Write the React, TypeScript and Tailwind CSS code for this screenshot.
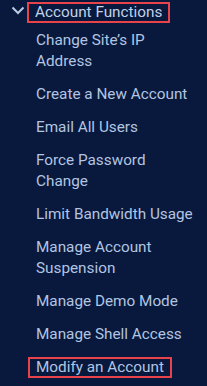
const items = [
    "Change Site\u2019s IP Address",
    "Create a New Account",
    "Email All Users",
    "Force Password Change",
    "Limit Bandwidth Usage",
    "Manage Account Suspension",
    "Manage Demo Mode",
    "Manage Shell Access",
]

export default function App() {
    return (
        <div className="w-[207px] h-[386px] overflow-hidden bg-[#08193d] font-['Roboto',sans-serif] text-[15.3px] text-[#b3c5e2]">
            {/* Section header */}
            <div className="flex items-center pt-[2px] h-[23px]">
                <svg
                    width="14"
                    height="9"
                    viewBox="0 0 14 9"
                    className="ml-[11px] mr-[2px] -mt-[4px] shrink-0"
                >
                    <path
                        d="M1.5 1.5 L7 7 L12.5 1.5"
                        fill="none"
                        stroke="#b9cbe6"
                        strokeWidth="2"
                    />
                </svg>
                <span className="inline-block border-2 border-[#e8434b] px-[6px] leading-[17px] text-[#c3d1e8]">
                    Account Functions
                </span>
            </div>

            {/* Links */}
            <ul className="flex flex-col gap-[12px] pt-[7px] pl-[36px] pr-[8px] leading-[21px]">
                {items.map((item) => (
                    <li key={item} className="max-w-[160px]">
                        {item}
                    </li>
                ))}
                <li>
                    <span className="inline-block -ml-[8px] border-2 border-[#e8434b] px-[6px] leading-[17px]">
                        Modify an Account
                    </span>
                </li>
            </ul>
        </div>
    )
}
